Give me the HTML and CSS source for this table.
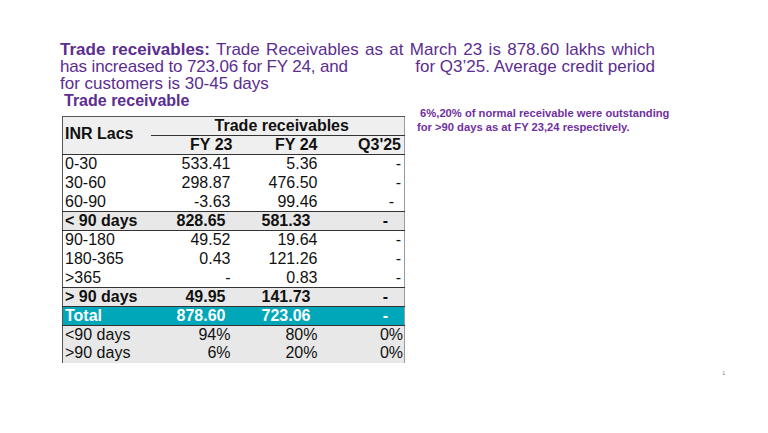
FILE: index.html
```html
<!DOCTYPE html>
<html>
<head>
<meta charset="utf-8">
<link rel="stylesheet" href="styles.css">
</head>
<body>
<div class="slide">
  <p class="intro"><span class="line jl"><b>Trade receivables:</b> Trade Receivables as at March 23 is 878.60 lakhs which</span><span class="line split"><span class="tight">has increased to 723.06 for FY 24, and</span><span>for Q3’25. Average credit period</span></span><span class="line">for customers is 30-45 days</span></p>
  <div class="content">
    <div class="left">
      <h2 class="subhead">Trade receivable</h2>
      <table class="tr">
        <colgroup>
          <col class="c1"><col class="c2"><col class="c3"><col class="c4">
        </colgroup>
        <thead>
          <tr>
            <th rowspan="2" class="inr">INR Lacs</th>
            <th colspan="3" class="group">Trade receivables</th>
          </tr>
          <tr class="fy">
            <th>FY 23</th><th>FY 24</th><th>Q3'25</th>
          </tr>
        </thead>
        <tbody>
          <tr><td>0-30</td><td>533.41</td><td>5.36</td><td>-</td></tr>
          <tr><td>30-60</td><td>298.87</td><td>476.50</td><td>-</td></tr>
          <tr><td>60-90</td><td>-3.63</td><td>99.46</td><td class="mid">-</td></tr>
          <tr class="sub"><td>&lt; 90 days</td><td class="b1">828.65</td><td class="b2">581.33</td><td class="b3">-</td></tr>
          <tr><td>90-180</td><td>49.52</td><td>19.64</td><td>-</td></tr>
          <tr><td>180-365</td><td>0.43</td><td>121.26</td><td>-</td></tr>
          <tr><td>&gt;365</td><td>-</td><td>0.83</td><td>-</td></tr>
          <tr class="sub"><td>&gt; 90 days</td><td class="b1">49.95</td><td class="b2">141.73</td><td class="b3">-</td></tr>
          <tr class="total"><td>Total</td><td class="b1">878.60</td><td class="b2">723.06</td><td class="b3">-</td></tr>
          <tr class="pct"><td>&lt;90 days</td><td>94%</td><td>80%</td><td>0%</td></tr>
          <tr class="pct"><td>&gt;90 days</td><td>6%</td><td>20%</td><td>0%</td></tr>
        </tbody>
      </table>
    </div>
    <p class="note">&nbsp;6%,20% of normal receivable were outstanding<br>for &gt;90 days as at FY 23,24 respectively.</p>
  </div>
  <span class="pagenum">1</span>
</div>
</body>
</html>
```

FILE: styles.css
```css
html, body {
  margin: 0;
  padding: 0;
  background: #ffffff;
}

.slide {
  position: relative;
  width: 768px;
  height: 433px;
  padding: 41px 0 0 60px;
  box-sizing: border-box;
  font-family: "Liberation Sans", Arial, sans-serif;
}

.intro {
  margin: 0;
  width: 595px;
  font-size: 17px;
  line-height: 17px;
  color: #5c2d91;
}

.line {
  display: block;
  white-space: nowrap;
}

.line.jl {
  white-space: normal;
  text-align: justify;
  text-align-last: justify;
}

.line.split {
  display: flex;
  justify-content: space-between;
}

.tight {
  letter-spacing: -0.15px;
}

.intro b {
  font-weight: bold;
}

.content {
  display: flex;
  align-items: flex-start;
}

.left {
  display: flex;
  flex-direction: column;
}

.subhead {
  margin: 0 0 0 4px;
  font-size: 16px;
  line-height: 18px;
  font-weight: bold;
  color: #5c2d91;
}

.tr {
  margin: 6px 0 0 2px;
  border-collapse: collapse;
  table-layout: fixed;
  width: 342px;
  font-size: 16px;
  color: #111111;
  border-left: 1px solid #555555;
  border-right: 1px solid #9a9a9a;
}

.c1 { width: 88px; }
.c2 { width: 85px; }
.c3 { width: 85px; }
.c4 { width: 84px; }

.tr tbody tr {
  height: 19px;
}

.tr tbody tr.pct {
  height: 18.5px;
}

.tr th, .tr td {
  padding: 0 3px 0 2px;
  line-height: 18px;
  white-space: nowrap;
  overflow: hidden;
}

.tr thead tr {
  background: #efefef;
  height: 18px;
}

.tr thead tr:first-child {
  border-top: 1px solid #555555;
}

.tr thead th {
  font-weight: bold;
}

.tr th.inr {
  text-align: left;
  vertical-align: middle;
  padding-left: 2px;
  padding-bottom: 4px;
}

.tr th.group {
  text-align: center;
  border-bottom: 1px solid #333333;
  padding-left: 12px;
}

.tr tr.fy th {
  text-align: right;
  padding-right: 3px;
}

.tr thead {
  border-bottom: 1px solid #333333;
}

.tr td {
  text-align: right;
}

.tr td:first-child {
  text-align: left;
}

.tr td:nth-child(2) {
  padding-right: 5px;
}

.tr td.mid {
  padding-right: 10px;
}

.tr tr.sub {
  background: #e8e8e8;
  font-weight: bold;
  border-top: 1px solid #333333;
  border-bottom: 1px solid #333333;
}

.tr td.b1 { padding-right: 10px; }
.tr td.b2 { padding-right: 10px; }
.tr td.b3 { padding-right: 16px; }

.tr tr.total {
  background: #00a7b8;
  color: #ffffff;
  font-weight: bold;
  border-bottom: 1px solid #333333;
}

.tr tr.pct {
  background: #e8e8e8;
}

.tr tr.pct td:last-child {
  padding-right: 1px;
}

.note {
  margin: 14px 0 0 12px;
  font-size: 11.2px;
  line-height: 14px;
  font-weight: bold;
  color: #7030a0;
}

.pagenum {
  position: absolute;
  left: 722px;
  top: 370px;
  font-size: 6px;
  color: #8a85b0;
}
```
